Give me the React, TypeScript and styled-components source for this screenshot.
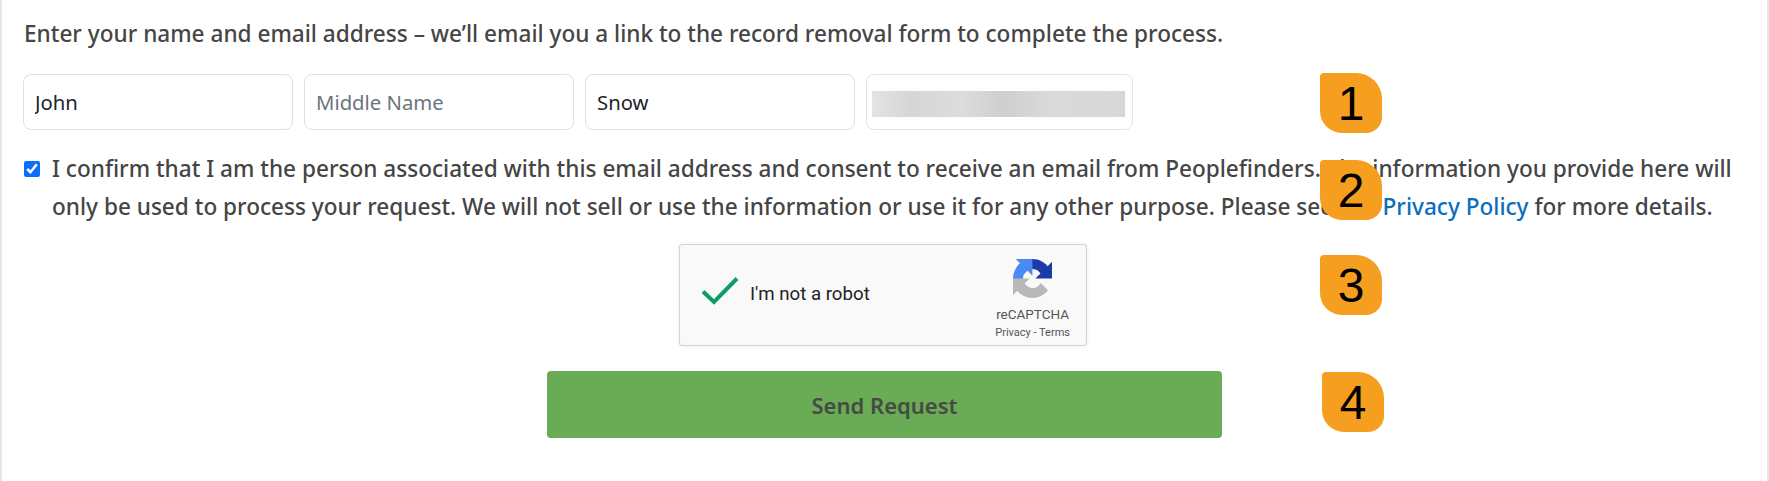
import React from 'react'
import styled, { createGlobalStyle } from 'styled-components'

const GlobalStyle = createGlobalStyle`
  html, body {
    margin: 0;
    padding: 0;
    background: #ffffff;
  }
`

const badges = [
  { label: '1', top: 73, left: 1320 },
  { label: '2', top: 160, left: 1320 },
  { label: '3', top: 255, left: 1320 },
  { label: '4', top: 372, left: 1322 },
]

const App: React.FC = () => {
  return (
    <Page>
      <GlobalStyle />
      <Intro>
        Enter your name and email address – we’ll email you a link to the record removal form to complete the process.
      </Intro>
      <FieldRow>
        <Input readOnly value='John' />
        <Input readOnly placeholder='Middle Name' />
        <Input readOnly value='Snow' />
        <EmailField>
          <BlurredEmail />
        </EmailField>
      </FieldRow>
      <Consent>
        <Check type='checkbox' defaultChecked />
        <ConsentText>
          I confirm that I am the person associated with this email address and consent to receive an email from
          Peoplefinders. The information you provide here will only be used to process your request. We will not sell
          or use the information or use it for any other purpose. Please see our <PolicyLink>Privacy Policy</PolicyLink>{' '}
          for more details.
        </ConsentText>
      </Consent>
      <Captcha>
        <CheckMark viewBox='0 0 38 29'>
          <path d='M2 15.5 L13 26 L36 2.5' fill='none' stroke='#0f9d63' strokeWidth='4' />
        </CheckMark>
        <CaptchaLabel>I'm not a robot</CaptchaLabel>
        <CaptchaBrand>
          <CaptchaLogo viewBox='0 0 64 64'>
            <path
              d='M64 31.955l-.033-1.37V4.687l-7.16 7.16C50.948 4.674 42.033.093 32.05.093c-10.4 0-19.622 4.96-25.458 12.64l11.736 11.86a15.55 15.55 0 0 1 4.754-5.334c2.05-1.6 4.952-2.906 8.968-2.906.485 0 .86.057 1.135.163 4.976.393 9.288 3.14 11.828 7.124l-8.307 8.307L64 31.953'
              fill='#1c3aa9'
            />
            <path
              d='M31.862 0l-1.37.033H4.594l7.16 7.16C4.58 13.052 0 21.967 0 31.95c0 10.4 4.96 19.622 12.64 25.458L24.5 45.672a15.55 15.55 0 0 1-5.334-4.754c-1.6-2.05-2.906-4.952-2.906-8.968 0-.485.057-.86.163-1.135.393-4.976 3.14-9.288 7.124-11.828l8.307 8.307L31.86 0'
              fill='#4a8af4'
            />
            <path
              d='M.002 31.953l.033 1.37v25.898l7.16-7.16c5.86 7.173 14.775 11.754 24.76 11.754 10.4 0 19.622-4.96 25.458-12.64l-11.736-11.86a15.55 15.55 0 0 1-4.754 5.334c-2.05 1.6-4.952 2.906-8.968 2.906-.485 0-.86-.057-1.135-.163-4.976-.393-9.288-3.14-11.828-7.124l8.307-8.307L0 31.95'
              fill='#b8b8b8'
            />
          </CaptchaLogo>
          <CaptchaName>reCAPTCHA</CaptchaName>
          <CaptchaLinks>Privacy - Terms</CaptchaLinks>
        </CaptchaBrand>
      </Captcha>
      <SendButton>Send Request</SendButton>
      {badges.map((b) => (
        <Badge key={b.label} $top={b.top} $left={b.left}>
          {b.label}
        </Badge>
      ))}
    </Page>
  )
}

const Page = styled.div`
  position: relative;
  box-sizing: border-box;
  width: 1769px;
  height: 481px;
  padding: 20px 30px 0 21px;
  overflow: hidden;
  background: #ffffff;
  border-left: 2px solid #e6e6e6;
  border-right: 2px solid #e6e6e6;
  font-family: 'Noto Sans', sans-serif;
  color: #454545;
  &::after {
    content: '';
    position: absolute;
    top: 0;
    bottom: 0;
    right: 5px;
    width: 1px;
    background: #f3f3f3;
  }
`

const Intro = styled.p`
  margin: 0 0 0 1px;
  font-size: 22.6px;
  font-weight: 500;
  line-height: 28px;
  white-space: nowrap;
`

const FieldRow = styled.div`
  display: flex;
  gap: 11.5px;
  margin-top: 26px;
`

const Input = styled.input`
  box-sizing: border-box;
  width: 269.5px;
  height: 56px;
  padding: 0 11px;
  border: 1px solid #dfdfdf;
  border-radius: 8px;
  outline: none;
  background: #ffffff;
  font-family: 'Noto Sans', sans-serif;
  font-size: 20.3px;
  color: #212529;
  &::placeholder {
    color: #6c757d;
    opacity: 1;
  }
`

const EmailField = styled.div`
  box-sizing: border-box;
  width: 267px;
  height: 56px;
  padding: 16px 7px 12px 5px;
  border: 1px solid #e4e4e4;
  border-radius: 8px;
`

const BlurredEmail = styled.div`
  height: 26px;
  background: linear-gradient(90deg, #e4e4e4, #d6d6d6 15%, #dcdcdc 35%, #cfcfcf 52%, #dadada 70%, #d7d7d7);
`

const Consent = styled.label`
  display: flex;
  gap: 12px;
  margin: 20px 0 0 1px;
  font-size: 22.6px;
  font-weight: 500;
  line-height: 38px;
`

const Check = styled.input`
  width: 16px;
  height: 16px;
  margin: 11px 0 0 0;
  flex: none;
  accent-color: #0d6efd;
`

const ConsentText = styled.span`
  display: block;
`

const PolicyLink = styled.a`
  color: #0a6ebd;
`

const Captcha = styled.div`
  display: flex;
  align-items: center;
  box-sizing: border-box;
  width: 408px;
  height: 102px;
  margin: 18px auto 0 656px;
  padding: 0 16px 0 21px;
  background: #f9f9f9;
  border: 1px solid #d3d3d3;
  border-radius: 3px;
  box-shadow: 0 0 4px rgba(0, 0, 0, 0.08);
`

const CheckMark = styled.svg`
  width: 38px;
  height: 29px;
  margin-bottom: 10px;
`

const CaptchaLabel = styled.span`
  margin: 0 0 2px 11px;
  font-family: Roboto, sans-serif;
  font-size: 18.7px;
  color: #222222;
`

const CaptchaBrand = styled.div`
  display: flex;
  flex-direction: column;
  align-items: center;
  margin-left: auto;
  padding-top: 9px;
  font-family: Roboto, sans-serif;
  color: #555555;
`

const CaptchaLogo = styled.svg`
  width: 39px;
  height: 39px;
  margin-bottom: 7px;
`

const CaptchaName = styled.span`
  font-size: 13.5px;
  line-height: 19px;
`

const CaptchaLinks = styled.span`
  font-size: 11px;
  line-height: 17px;
`

const SendButton = styled.button`
  display: block;
  width: 675px;
  height: 67px;
  margin: 25px 0 0 524px;
  border: none;
  border-radius: 4px;
  background: #6aab55;
  font-family: 'Noto Sans', sans-serif;
  font-size: 22px;
  font-weight: 600;
  color: #454a45;
`

const Badge = styled.div<{ $top: number; $left: number }>`
  position: absolute;
  top: ${(p) => p.$top}px;
  left: ${(p) => p.$left - 2}px;
  display: flex;
  align-items: center;
  justify-content: center;
  width: 62px;
  height: 60px;
  border-radius: 4px 26px 16px 22px;
  background: #f69e1f;
  font-family: 'Liberation Sans', Arial, sans-serif;
  font-size: 48px;
  color: #000000;
`

export default App
